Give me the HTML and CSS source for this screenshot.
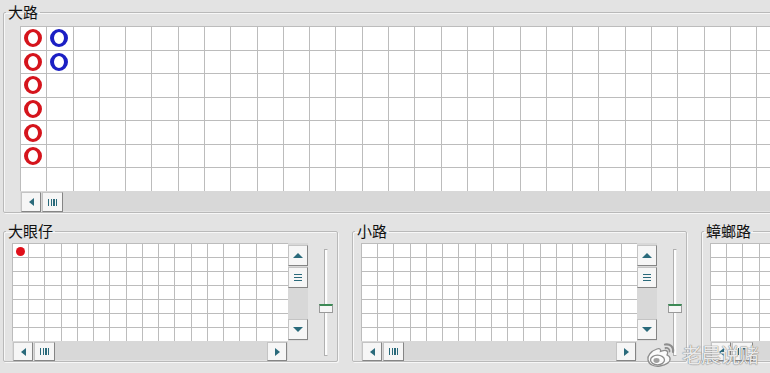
FILE: index.html
```html
<!DOCTYPE html>
<html lang="zh-CN">
<head>
<meta charset="utf-8">
<title>路单</title>
<link rel="stylesheet" href="styles.css">
</head>
<body>
<fieldset class="group group-main">
  <legend>大路</legend>
  <div class="main-body">
    <div class="board board-big">
      <span class="ring ring-red"></span>
      <span class="ring ring-red"></span>
      <span class="ring ring-red"></span>
      <span class="ring ring-red"></span>
      <span class="ring ring-red"></span>
      <span class="ring ring-red"></span>
      <span class="empty"></span>
      <span class="ring ring-blue"></span>
      <span class="ring ring-blue"></span>
    </div>
    <div class="hscroll hscroll-big">
      <div class="sb-btn"><span class="tri tri-left"></span></div>
      <div class="sb-btn sb-thumb-h"><span class="grip-v"></span></div>
    </div>
  </div>
</fieldset>

<div class="row">
  <fieldset class="group group-sub">
    <legend>大眼仔</legend>
    <div class="sub-body">
      <div class="scrollview">
        <div class="board board-small"><span class="dot dot-red"></span></div>
        <div class="vscroll">
          <div class="sb-btn sb-v-btn"><span class="tri tri-up"></span></div>
          <div class="sb-btn sb-thumb-v"><span class="grip-h"></span></div>
          <div class="sb-space"></div>
          <div class="sb-btn sb-v-btn"><span class="tri tri-down"></span></div>
        </div>
        <div class="hscroll">
          <div class="sb-btn sb-h-btn"><span class="tri tri-left"></span></div>
          <div class="sb-btn sb-thumb-h"><span class="grip-v"></span></div>
          <div class="sb-space"></div>
          <div class="sb-btn sb-h-btn"><span class="tri tri-right"></span></div>
        </div>
        <div class="corner"></div>
      </div>
      <div class="slider">
        <div class="slider-track"></div>
        <div class="slider-thumb"></div>
      </div>
    </div>
  </fieldset>

  <fieldset class="group group-sub">
    <legend>小路</legend>
    <div class="sub-body">
      <div class="scrollview">
        <div class="board board-small"></div>
        <div class="vscroll">
          <div class="sb-btn sb-v-btn"><span class="tri tri-up"></span></div>
          <div class="sb-btn sb-thumb-v"><span class="grip-h"></span></div>
          <div class="sb-space"></div>
          <div class="sb-btn sb-v-btn"><span class="tri tri-down"></span></div>
        </div>
        <div class="hscroll">
          <div class="sb-btn sb-h-btn"><span class="tri tri-left"></span></div>
          <div class="sb-btn sb-thumb-h"><span class="grip-v"></span></div>
          <div class="sb-space"></div>
          <div class="sb-btn sb-h-btn"><span class="tri tri-right"></span></div>
        </div>
        <div class="corner"></div>
      </div>
      <div class="slider">
        <div class="slider-track"></div>
        <div class="slider-thumb"></div>
      </div>
    </div>
  </fieldset>

  <fieldset class="group group-sub">
    <legend>蟑螂路</legend>
    <div class="sub-body">
      <div class="scrollview">
        <div class="board board-small"></div>
        <div class="vscroll">
          <div class="sb-btn sb-v-btn"><span class="tri tri-up"></span></div>
          <div class="sb-btn sb-thumb-v"><span class="grip-h"></span></div>
          <div class="sb-space"></div>
          <div class="sb-btn sb-v-btn"><span class="tri tri-down"></span></div>
        </div>
        <div class="hscroll">
          <div class="sb-btn sb-h-btn"><span class="tri tri-left"></span></div>
          <div class="sb-btn sb-thumb-h"><span class="grip-v"></span></div>
          <div class="sb-space"></div>
          <div class="sb-btn sb-h-btn"><span class="tri tri-right"></span></div>
        </div>
        <div class="corner"></div>
      </div>
    </div>
  </fieldset>
</div>

<div class="watermark">
  <svg class="wm-logo" width="30" height="28" viewBox="0 0 30 28">
    <path d="M11 8 C5 10 1 15 2 19 C3 24 9 26 14 25 C20 24 25 21 24 17 C23.5 15 22 14.5 21 14 C22 12 22 10 20 9.5 C18 9 16 10 14.5 10.5 C15 8.5 14 7 11 8 Z" fill="rgba(255,255,255,0.85)" stroke="#8e8e8e" stroke-width="1.3"/>
    <ellipse cx="11.5" cy="19" rx="7" ry="4.8" fill="none" stroke="#8e8e8e" stroke-width="1.3"/>
    <ellipse cx="10.5" cy="19.5" rx="3" ry="2.4" fill="#a0a0a0"/>
    <path d="M19 3.5 C24 2.5 28 6 27 11" fill="none" stroke="#8e8e8e" stroke-width="2.2" stroke-linecap="round"/>
    <path d="M19.5 7 C22 6.5 24 8.5 23.5 10.5" fill="none" stroke="#8e8e8e" stroke-width="1.8" stroke-linecap="round"/>
  </svg>
  <span class="wm-text">老晨说赌</span>
</div>
</body>
</html>
```

FILE: styles.css
```css
* { box-sizing: border-box; }

html, body { margin: 0; padding: 0; }

body {
  width: 770px;
  height: 373px;
  overflow: hidden;
  position: relative;
  background: #e3e3e3;
  font-family: "Noto Sans CJK SC", "Noto Sans", sans-serif;
}

/* group boxes */
.group {
  margin: 0;
  padding: 0;
  min-width: 0;
  border: 1px solid #b9b9b9;
  border-radius: 2px;
  box-shadow: inset 1px 1px 0 #f7f7f7, 1px 1px 0 #f7f7f7;
}

.group > legend {
  font-size: 15px;
  line-height: 20px;
  padding: 0 2px;
  margin-left: 2px;
  color: #111;
}

.group-main {
  margin: 2px 0 0 3px;
  width: 800px;
}

.main-body {
  margin: 4px 0 1px 16px;
}

/* boards */
.board {
  background-color: #fff;
}

.board-big {
  height: 165px;
  display: grid;
  grid-template-rows: repeat(7, 23.57px);
  grid-auto-columns: 26.29px;
  grid-auto-flow: column;
  background-image:
    repeating-linear-gradient(to right, #bcbcbc 0 1px, transparent 1px 26.29px),
    repeating-linear-gradient(to bottom, #bcbcbc 0 1px, transparent 1px 23.57px);
}

.board-small {
  width: 276px;
  height: 98px;
  display: grid;
  grid-template-rows: repeat(7, 14px);
  grid-auto-columns: 16.24px;
  grid-auto-flow: column;
  background-image:
    repeating-linear-gradient(to right, #bcbcbc 0 1px, transparent 1px 16.24px),
    repeating-linear-gradient(to bottom, #bcbcbc 0 1px, transparent 1px 14px);
}

.ring {
  justify-self: center;
  align-self: center;
  width: 18px;
  height: 18px;
  margin: 1px 1px 0 0;
  border-radius: 50%;
  border-style: solid;
  border-width: 3px 4px;
}

.ring-red { border-color: #d5141c; }
.ring-blue { border-color: #1b1fc4; }

.dot {
  justify-self: center;
  align-self: center;
  width: 9px;
  height: 9px;
  margin: 3px 0 0 1px;
  border-radius: 50%;
}

.dot-red { background: #e0101a; }

/* scrollbars */
.hscroll {
  display: flex;
  height: 19px;
  padding: 1px 1px 0 1px;
  background: #d8d8d8;
}

.hscroll-big {
  height: 20px;
  padding-top: 1px;
}

.vscroll {
  display: flex;
  flex-direction: column;
  padding: 2px 0 1px 0;
  background: #d8d8d8;
}

.sb-space { flex: 1; }

.sb-btn {
  display: flex;
  align-items: center;
  justify-content: center;
  width: 20px;
  height: 19px;
  background: #f6f6f6;
  border: 1px solid #c4c4c4;
  border-right-color: #858585;
  border-bottom-color: #858585;
}

.hscroll-big .sb-btn { height: 20px; }

.sb-thumb-h { width: 21px; margin-left: 1px; }

.sb-v-btn { width: 20px; height: 21px; }

.sb-thumb-v { width: 20px; height: 21px; margin-top: 1px; }

.tri { width: 0; height: 0; border-style: solid; }

.tri-left {
  border-width: 4px 5px 4px 0;
  border-color: transparent #2a6a7b transparent transparent;
}

.tri-right {
  border-width: 4px 0 4px 5px;
  border-color: transparent transparent transparent #2a6a7b;
}

.tri-up {
  border-width: 0 5px 5px 5px;
  border-color: transparent transparent #2a6a7b transparent;
}

.tri-down {
  border-width: 5px 5px 0 5px;
  border-color: #2a6a7b transparent transparent transparent;
}

.grip-v {
  width: 9px;
  height: 7px;
  background: repeating-linear-gradient(to right, #2a6a7b 0 1.4px, transparent 1.4px 2.6px);
}

.grip-h {
  width: 8px;
  height: 8px;
  background: repeating-linear-gradient(to bottom, #2a6a7b 0 1.4px, transparent 1.4px 3px);
}

/* sub groups */
.row {
  display: flex;
  gap: 14px;
  margin: 6px 0 0 3px;
}

.group-sub {
  flex: none;
  width: 335px;
}

.group-sub > legend { line-height: 24px; }

.sub-body {
  display: flex;
  align-items: flex-start;
  margin: 0 3px 1px 8px;
}

.scrollview {
  display: grid;
  grid-template-columns: 276px 20px;
  grid-template-rows: 98px 19px;
}

.corner { background: #e3e3e3; }

.slider {
  position: relative;
  width: 14px;
  height: 107px;
  margin: 6px 0 0 11px;
}

.slider-track {
  width: 4px;
  height: 100%;
  margin: 0 auto;
  background: #fdfdfd;
  border: 1px solid #b0b0b0;
  border-right-color: #e8e8e8;
}

.slider-thumb {
  position: absolute;
  left: 0;
  top: 55px;
  width: 14px;
  height: 9px;
  background: #f6f6f6;
  border: 1px solid #9a9a9a;
  border-top: 2px solid #3d8a56;
}

/* watermark */
.watermark {
  position: absolute;
  left: 646px;
  top: 341px;
  display: flex;
  align-items: center;
  gap: 6px;
}

.wm-text {
  font-size: 20px;
  line-height: 28px;
  color: rgba(255, 255, 255, 0.85);
  text-shadow: 0 0 1px #777, 0 0 1px #777;
  letter-spacing: -1px;
}
```
